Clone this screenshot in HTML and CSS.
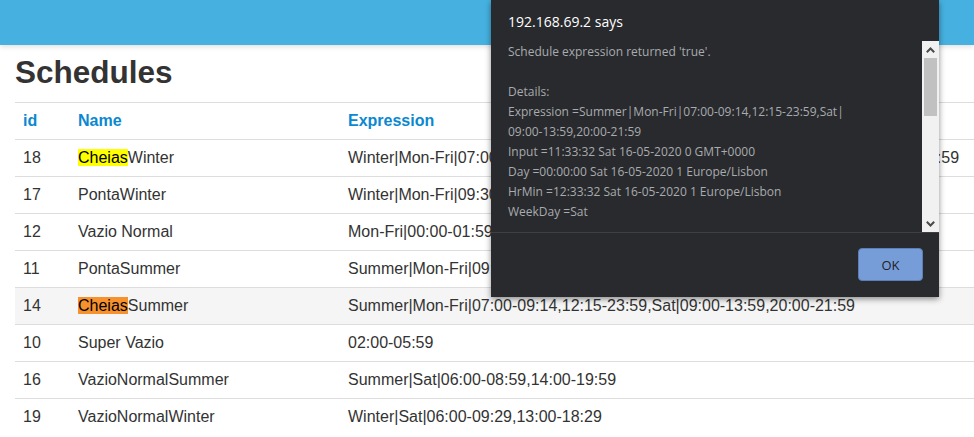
FILE: index.html
```html
<!DOCTYPE html>
<html>
<head>
<meta charset="utf-8">
<title>Schedules</title>
<link rel="stylesheet" href="styles.css">
</head>
<body>
<header class="topbar"></header>
<main class="content">
  <h1 class="page-title">Schedules</h1>
  <table class="sched">
    <thead>
      <tr><th class="c-id">id</th><th class="c-name">Name</th><th>Expression</th></tr>
    </thead>
    <tbody>
      <tr><td>18</td><td><span class="hl-yellow">Cheias</span>Winter</td><td>Winter|Mon-Fri|07:00-09:29,12:00-18:29,21:00-23:59,Sat,Hol|09:30-13:29,18:30-21:59</td></tr>
      <tr><td>17</td><td>PontaWinter</td><td>Winter|Mon-Fri|09:30-12:00,18:30-21:00</td></tr>
      <tr><td>12</td><td>Vazio Normal</td><td>Mon-Fri|00:00-01:59,22:00-23:59</td></tr>
      <tr><td>11</td><td>PontaSummer</td><td>Summer|Mon-Fri|09:15-12:14</td></tr>
      <tr class="hover"><td>14</td><td><span class="hl-orange">Cheias</span>Summer</td><td>Summer|Mon-Fri|07:00-09:14,12:15-23:59,Sat|09:00-13:59,20:00-21:59</td></tr>
      <tr><td>10</td><td>Super Vazio</td><td>02:00-05:59</td></tr>
      <tr><td>16</td><td>VazioNormalSummer</td><td>Summer|Sat|06:00-08:59,14:00-19:59</td></tr>
      <tr><td>19</td><td>VazioNormalWinter</td><td>Winter|Sat|06:00-09:29,13:00-18:29</td></tr>
    </tbody>
  </table>
</main>

<div class="dialog">
  <div class="dlg-title">192.168.69.2 says</div>
  <div class="dlg-body">
    <div class="dlg-text">
      <div>Schedule expression returned 'true'.</div>
      <div>&nbsp;</div>
      <div>Details:</div>
      <div>Expression =Summer|Mon-Fri|07:00-09:14,12:15-23:59,Sat|</div>
      <div>09:00-13:59,20:00-21:59</div>
      <div>Input =11:33:32 Sat 16-05-2020 0 GMT+0000</div>
      <div>Day =00:00:00 Sat 16-05-2020 1 Europe/Lisbon</div>
      <div>HrMin =12:33:32 Sat 16-05-2020 1 Europe/Lisbon</div>
      <div>WeekDay =Sat</div>
    </div>
    <div class="sbar">
      <div class="sbar-btn">
        <svg width="9" height="6" viewBox="0 0 9 6"><path d="M0.8 5.2 L4.5 1.5 L8.2 5.2" fill="none" stroke="#4a4a4a" stroke-width="2"/></svg>
      </div>
      <div class="sbar-track"><div class="sbar-thumb"></div></div>
      <div class="sbar-btn">
        <svg width="9" height="6" viewBox="0 0 9 6"><path d="M0.8 0.8 L4.5 4.5 L8.2 0.8" fill="none" stroke="#4a4a4a" stroke-width="2"/></svg>
      </div>
    </div>
  </div>
  <div class="dlg-foot">
    <button class="ok-btn">OK</button>
  </div>
</div>
</body>
</html>
```

FILE: styles.css
```css
html, body {
  margin: 0;
  padding: 0;
  overflow: hidden;
  background: #fff;
}
body {
  font-family: "Liberation Sans", Arial, sans-serif;
  font-size: 16px;
  color: #333;
  position: relative;
  width: 974px;
  height: 437px;
}
.topbar {
  height: 45px;
  background: #46b1e0;
  box-shadow: 0 2px 5px rgba(0, 0, 0, 0.12);
  position: relative;
  z-index: 1;
}
.content {
  padding: 0 0 0 15px;
}
.page-title {
  margin: 11px 0 13px;
  font-size: 31.5px;
  line-height: 33px;
  font-weight: bold;
  color: #333;
}
.sched {
  border-collapse: collapse;
  width: 1000px;
}
.sched th, .sched td {
  padding: 8px;
  line-height: 20px;
  border-top: 1px solid #ddd;
  text-align: left;
  white-space: nowrap;
}
.sched th {
  color: #0b88cf;
  font-weight: bold;
}
.c-id { width: 39px; }
.c-name { width: 254px; }
.sched tr.hover td { background: #f5f5f5; }
.hl-yellow { background: #ffff00; color: #000; }
.hl-orange { background: #f6912e; color: #000; }

.dialog {
  position: absolute;
  left: 491px;
  top: 0;
  width: 448px;
  height: 297px;
  background: #292a2d;
  box-shadow: 0 2px 6px rgba(0, 0, 0, 0.45);
  font-family: "Open Sans", "Noto Sans", sans-serif;
  display: flex;
  flex-direction: column;
  z-index: 5;
}
.dlg-title {
  padding: 12px 17px 0;
  height: 20px;
  line-height: 20px;
  font-size: 14px;
  color: #fff;
  margin-bottom: 9px;
}
.dlg-body {
  height: 191px;
  display: flex;
}
.dlg-text {
  flex: 1;
  overflow: hidden;
  padding: 1px 0 0 17px;
  font-size: 12px;
  line-height: 20px;
  color: #a8abaf;
  white-space: nowrap;
}
.sbar {
  width: 17px;
  display: flex;
  flex-direction: column;
  background: #f1f1f1;
}
.sbar-btn {
  height: 17px;
  display: flex;
  align-items: center;
  justify-content: center;
}
.sbar-track {
  flex: 1;
  padding: 0 2px;
}
.sbar-thumb {
  height: 58px;
  background: #c1c1c1;
}
.dlg-foot {
  flex: 1;
  border-top: 1px solid #3f4043;
  display: flex;
  justify-content: flex-end;
  align-items: flex-start;
  padding: 15px 16px 0 0;
}
.ok-btn {
  width: 65px;
  height: 33px;
  background: #779dd9;
  border: 1px solid #5c7fb8;
  border-radius: 4px;
  color: #202124;
  font-family: "Open Sans", "Noto Sans", sans-serif;
  font-size: 13px;
  padding: 0;
}
```
